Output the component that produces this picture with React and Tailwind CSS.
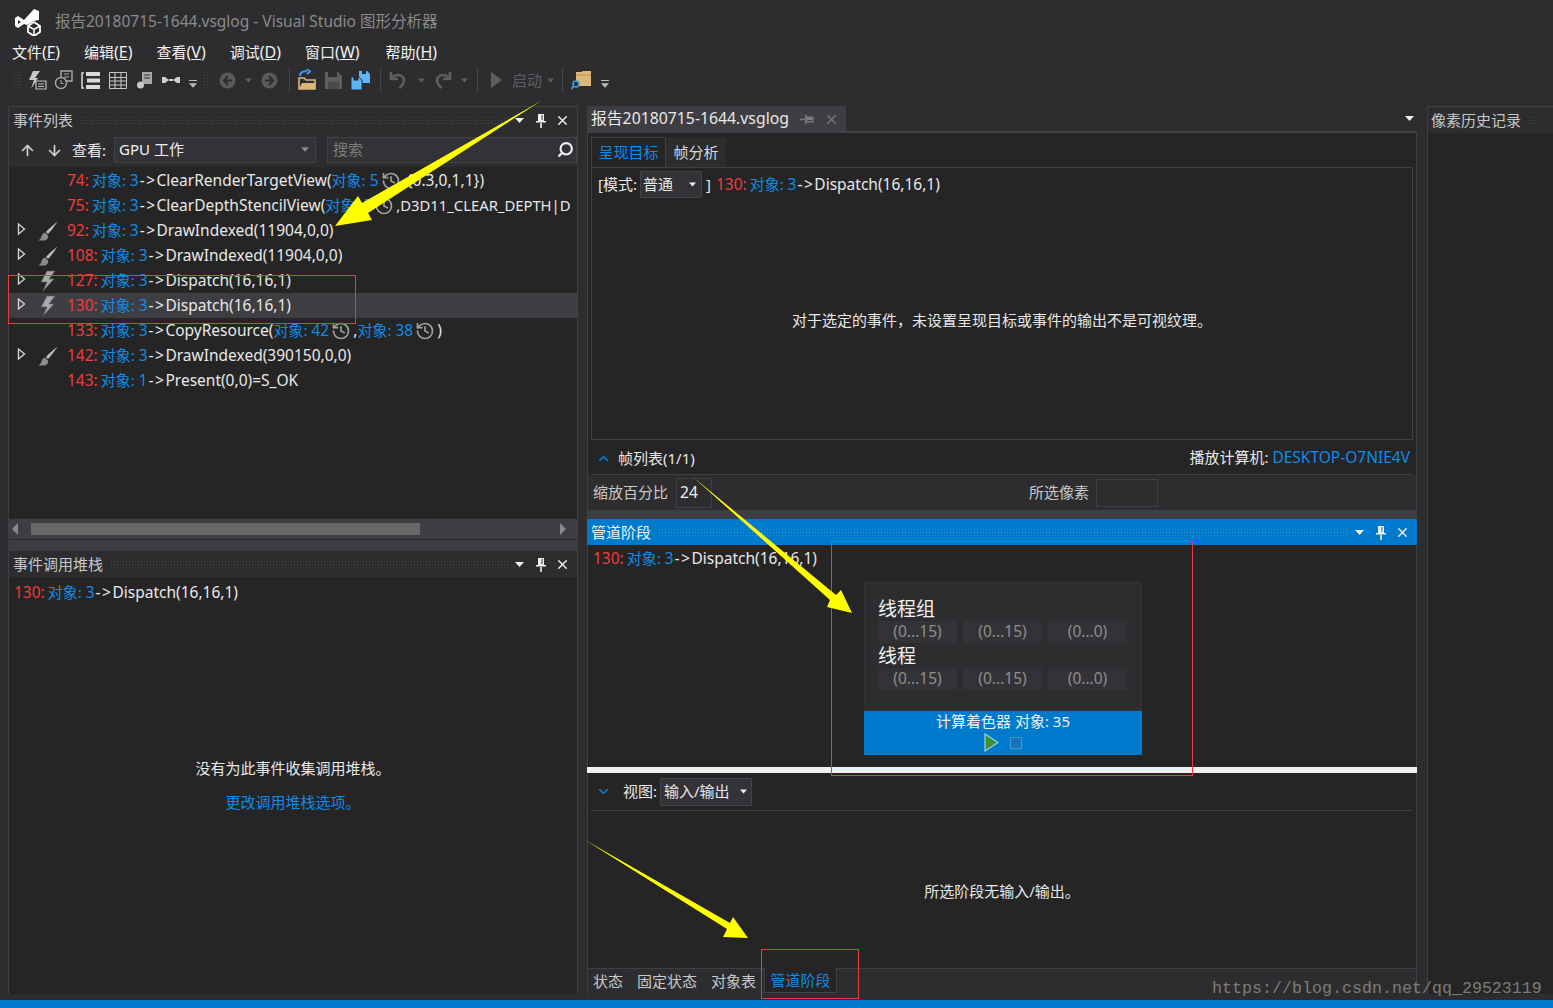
import { ArrowDown, ArrowUp, ChevronDown, ChevronUp, History, Search, X } from 'lucide-react';

const font = { fontFamily: '"Noto Sans", "Noto Sans CJK SC", sans-serif' };

function Caret({ className = 'text-[#f1f1f1]', w = 9 }) {
  return (
    <svg width={w} height="5" viewBox="0 0 9 5" className={className}>
      <path d="M0 0h9L4.500 5z" fill="currentColor" />
    </svg>
  );
}

function Grip({ className = '' }) {
  return <div className={`bg-[radial-gradient(#444448_1px,transparent_1px)] bg-[length:3px_3px] ${className}`} />;
}

function PinIcon({ className = 'text-[#f1f1f1]' }) {
  return (
    <svg width="10" height="15" viewBox="0 0 10 15" className={className}>
      <path d="M2 1h6v7H2zM0 8h10v1.500H0zM4.200 9h1.600v6H4.200z M5.500 2v5h1V2z" fill="currentColor" fillRule="evenodd" />
    </svg>
  );
}

function PanelHeader({ title, controls = true, titleClass = 'pl-[4px]' }) {
  return (
    <div className={`flex h-[26px] items-center bg-[#2d2d30] pr-[7px] text-[15px] text-[#c8c8c8] ${titleClass}`}>
      <span>{title}</span>
      <Grip className="mx-[7px] h-[9px] flex-1" />
      {controls && (
        <div className="flex items-center">
          <Caret />
          <PinIcon className="ml-[12px] text-[#f1f1f1]" />
          <X size={15} strokeWidth={2.2} className="ml-[9px] text-[#f1f1f1]" />
        </div>
      )}
    </div>
  );
}

function Call({ id, obj, children }) {
  return (
    <span className="text-[15.500px]">
      <span className="text-[#f03c3c]">{id}:</span>
      <span className="ml-[3px] text-[15px] text-[#0f8be8]">对象: </span>
      <span className="text-[#0f8be8]">{obj}</span>
      <span className="ml-[1px] text-[#e8e8e8]"><span className="tracking-[1.500px]">-&gt;</span>{children}</span>
    </span>
  );
}

function Brush() {
  return (
    <svg width="20" height="20" viewBox="0 0 20 20">
      <path d="M19.500 .5C15 4 10.500 8 8 11l2 2c3-3 6-7 9.500-12.500z" fill="#bdbdbd" />
      <path d="M7 11.500c-2 .5-3 2-3.500 4S2 18 .5 19.500h5.500c3 0 4.500-2.500 4-5z" fill="#8c8c8c" />
    </svg>
  );
}

function Bolt() {
  return (
    <svg width="18" height="22" viewBox="0 0 18 22">
      <path d="M8 1h8L10 9h5L4 21l4-9H2z" fill="#a9a9a9" stroke="#5c5c5c" strokeWidth="0.700" />
    </svg>
  );
}

function Expander() {
  return (
    <svg width="9" height="12" viewBox="0 0 9 12" className="-mt-[3px]">
      <path d="M1.500 1 7.500 6l-6 5z" fill="none" stroke="#d0d0d0" strokeWidth="1.400" />
    </svg>
  );
}

function Clock() {
  return <History size={20} strokeWidth={2} className="mx-[2px] inline-block shrink-0 text-[#a0a0a0]" />;
}

function EventRow({ expand, icon, selected, children }) {
  return (
    <div className={`flex h-[25px] items-center whitespace-nowrap ${selected ? 'bg-[#3e3e42]' : ''}`}>
      <div className="flex w-[17px] shrink-0 justify-end">{expand && <Expander />}</div>
      <div className="flex w-[41px] shrink-0 justify-center pl-[2px]">{icon}</div>
      <div className="flex items-center text-[15.500px]">{children}</div>
    </div>
  );
}

function ThreadCell({ children }) {
  return <div className="flex h-[22px] w-[79px] items-center justify-center bg-[#333337] text-[15.500px] text-[#8e8e8e]">{children}</div>;
}

function ToolSep({ className = 'mx-[8px]' }) {
  return <div className={`${className} h-[24px] w-[1px] bg-[#46464a]`} />;
}

function VsLogo() {
  return (
    <svg width="28" height="28" viewBox="0 0 28 28" className="ml-[14px] mt-[6px]">
      <path d="M1 10 4 8l6 4L20 1l5 2v9l-5 1-5 3-2 1-3-1-6 4-3-2zM4 12v4l3-2z" fill="#fff" fillRule="evenodd" />
      <path d="m14 18 6-4 6 4v6l-6 4-6-4z" fill="#2d2d30" stroke="#fff" strokeWidth="1.800" />
      <path d="m14 18 6 3.500 6-3.500M20 21.500V28" fill="none" stroke="#fff" strokeWidth="1.500" />
    </svg>
  );
}

function DropMark({ className }) {
  return (
    <div className={`${className} mt-[8px] flex flex-col items-center gap-[2px]`}>
      <div className="h-[1px] w-[8px] bg-[#bbbbbb]" />
      <Caret w={8} className="text-[#bbbbbb]" />
    </div>
  );
}

function Toolbar() {
  return (
    <div className="flex h-[30px] items-center pb-[2px] pl-[13px]">
      <Grip className="h-[24px] w-[8px]" />
      <svg width="20" height="20" viewBox="0 0 20 20" className="ml-[6px]">
        <path d="M6 1h7L8 8h3L4 19l3-9H2z" fill="#c8c8c8" />
        <path d="M9 11h10v8H9z" fill="#2d2d30" stroke="#c0c0c0" strokeWidth="1.200" />
        <path d="M11 14h6m-6 2.500h6" stroke="#c0c0c0" />
      </svg>
      <svg width="20" height="20" viewBox="0 0 20 20" className="ml-[7px]">
        <path d="M7 1h11v10H7z" fill="none" stroke="#a8a8a8" strokeWidth="1.400" />
        <path d="M10 4h5M10 7h5" stroke="#a8a8a8" />
        <circle cx="7" cy="13" r="5.500" fill="#2d2d30" stroke="#a8a8a8" strokeWidth="1.400" />
        <path d="M7 10v3.500h2.500" fill="none" stroke="#a8a8a8" />
      </svg>
      <svg width="19" height="19" viewBox="0 0 19 19" className="ml-[7px]">
        <path d="M5 1h14v4H5zM6 7.500h13v4H6zM5 14h14v4H5z" fill="#d8d8d8" />
        <path d="M3 2H1v15h2" fill="none" stroke="#d8d8d8" strokeWidth="1.500" />
      </svg>
      <svg width="18" height="17" viewBox="0 0 18 17" className="ml-[9px]">
        <path d="M.500.500h17v16H.500zM.500 5.500h17M.500 9h17M.500 13h17M6 1v15M12 1v15" fill="none" stroke="#c8c8c8" />
      </svg>
      <svg width="17" height="19" viewBox="0 0 17 19" className="ml-[9px]">
        <path d="M6 1h10v12H6z" fill="#a8a8a8" />
        <path d="M8 4h6M8 7h6" stroke="#2d2d30" />
        <circle cx="4.500" cy="14" r="3.500" fill="#c8c8c8" />
      </svg>
      <svg width="18" height="8" viewBox="0 0 18 8" className="ml-[9px]">
        <path d="M0 1h3l4 3-4 3H0zM18 1h-3l-4 3 4 3h3zM7 3h4v2H7z" fill="#d0d0d0" />
      </svg>
      <DropMark className="ml-[9px]" />
      <Grip className="ml-[6px] h-[24px] w-[6px]" />
      <svg width="17" height="17" viewBox="0 0 17 17" className="ml-[10px]">
        <circle cx="8.500" cy="8.500" r="8" fill="#5a5a5c" />
        <path d="M9 4 5 8.500 9 13M5 8.500h8" fill="none" stroke="#2d2d30" strokeWidth="2" />
      </svg>
      <Caret w={7} className="ml-[9px] text-[#5e5e60]" />
      <svg width="17" height="17" viewBox="0 0 17 17" className="ml-[9px]">
        <circle cx="8.500" cy="8.500" r="8" fill="#5a5a5c" />
        <path d="m8 4 4 4.500L8 13m4-4.500H4" fill="none" stroke="#2d2d30" strokeWidth="2" />
      </svg>
      <ToolSep className="ml-[11px] mr-[8px]" />
      <svg width="19" height="22" viewBox="0 0 19 22">
        <path d="M1 9h5l2 2h9v9H1z" fill="none" stroke="#dcb67a" strokeWidth="1.600" />
        <path d="M1 20l3-6h14l-2 6z" fill="#dcb67a" />
        <path d="M2 7c0-4 3-5 7-5M9 0l3 2.500L9 5" fill="none" stroke="#3aa0e8" strokeWidth="2" />
      </svg>
      <svg width="17" height="17" viewBox="0 0 17 17" className="ml-[8px]">
        <path d="M0 0h13l4 4v13H0z" fill="#5e5e60" />
        <path d="M3 0h9v5H3z" fill="#2d2d30" />
        <path d="M3 10h11v7H3z" fill="#4a4a4c" />
      </svg>
      <svg width="19" height="19" viewBox="0 0 19 19" className="ml-[9px]">
        <path d="M8 0h8l3 3v9H8z" fill="#5db5f5" />
        <path d="M0 6h8l3 3v10H0z" fill="#5db5f5" stroke="#2d2d30" />
        <path d="M2.500 6h5v3.500h-5zM11 0h4v3h-4z" fill="#2d2d30" />
      </svg>
      <ToolSep className="ml-[10px] mr-[8px]" />
      <svg width="18" height="18" viewBox="0 0 18 18">
        <path d="M2 1v7h7M2.500 8c2-4 7-5 10-3 4 3 3 8-2 12" fill="none" stroke="#5e5e60" strokeWidth="2.600" />
      </svg>
      <Caret w={7} className="ml-[11px] text-[#5e5e60]" />
      <svg width="18" height="18" viewBox="0 0 18 18" className="ml-[9px]">
        <path d="M16 1v7H9M15.500 8c-2-4-7-5-10-3-4 3-3 8 2 12" fill="none" stroke="#5e5e60" strokeWidth="2.600" />
      </svg>
      <Caret w={7} className="ml-[9px] text-[#5e5e60]" />
      <ToolSep className="ml-[9px] mr-[9px]" />
      <svg width="11" height="16" viewBox="0 0 11 16" className="ml-[4px]">
        <path d="M0 0 11 8 0 16z" fill="#5e5e60" />
      </svg>
      <span className="ml-[10px] text-[15px] text-[#5e5e60]">启动</span>
      <Caret w={7} className="ml-[5px] text-[#5e5e60]" />
      <ToolSep />
      <svg width="21" height="20" viewBox="0 0 21 20">
        <path d="M5 2h5l2-1h8v15H5z" fill="#dcb67a" />
        <path d="M5 5h15" stroke="#b08f55" />
        <circle cx="5" cy="14" r="3" fill="#2d2d30" stroke="#3aa0e8" strokeWidth="1.600" />
        <path d="m3 16-3 3" stroke="#3aa0e8" strokeWidth="1.800" />
      </svg>
      <DropMark className="ml-[9px]" />
    </div>
  );
}

function MenuItem({ label, hotkey, className }) {
  return (
    <span className={className}>
      {label}
      <span className="text-[16px]">(<span className="underline">{hotkey}</span>)</span>
    </span>
  );
}

export default function App() {
  return (
    <div style={font} className="relative flex h-[1008px] w-[1553px] flex-col overflow-hidden bg-[#2d2d30] text-[15px] text-[#f1f1f1]">
      {/* title bar */}
      <div className="flex h-[38px] items-center">
        <VsLogo />
        <span className="ml-[13px] mt-[6px] text-[15.500px] text-[#8a8a8a]">报告20180715-1644.vsglog - Visual Studio 图形分析器</span>
      </div>

      {/* menu */}
      <div className="flex h-[28px] items-center gap-[24px] pl-[12px]">
        <MenuItem label="文件" hotkey="F" />
        <MenuItem label="编辑" hotkey="E" />
        <MenuItem label="查看" hotkey="V" />
        <MenuItem label="调试" hotkey="D" />
        <MenuItem label="窗口" hotkey="W" />
        <MenuItem label="帮助" hotkey="H" className="ml-[2px]" />
      </div>

      <Toolbar />

      <div className="mt-[10px] flex h-[888px] pl-[8px]">
        {/* left column */}
        <div className="flex w-[570px] shrink-0 flex-col border-x border-t border-[#3f3f46]">
          <PanelHeader title="事件列表" />
          <div className="flex h-[34px] items-center bg-[#2d2d30]">
            <ArrowUp size={17} strokeWidth={2.400} className="ml-[10px] text-[#d0d0d0]" />
            <ArrowDown size={17} strokeWidth={2.400} className="ml-[10px] text-[#d0d0d0]" />
            <span className="ml-[9px] text-[#e8e8e8]">查看:</span>
            <div className="ml-[8px] flex h-[26px] w-[202px] items-center justify-between border border-[#434346] bg-[#333337] pb-[2px] pl-[4px] pr-[6px]">
              <span>GPU 工作</span>
              <Caret w={8} className="text-[#8a8a8a]" />
            </div>
            <div className="ml-[11px] flex h-[26px] flex-1 items-center justify-between border border-[#434346] bg-[#333337] pb-[2px] pl-[5px] pr-[2px] text-[#7d7d7d]">
              <span>搜索</span>
              <Search size={17} strokeWidth={3} className="-scale-x-100 text-[#f1f1f1]" />
            </div>
          </div>
          <div className="h-[351px] overflow-hidden bg-[#252526] pt-[1px]">
            <EventRow>
              <Call id="74" obj="3">ClearRenderTargetView(</Call>
              <span className="text-[#0f8be8]"><span className="text-[15px]">对象:</span> 5</span>
              <Clock />
              <span className="text-[#e8e8e8]">,{'{'}0.3,0,1,1{'}'})</span>
            </EventRow>
            <EventRow>
              <Call id="75" obj="3">ClearDepthStencilView(</Call>
              <span className="text-[#0f8be8]"><span className="text-[15px]">对象:</span> 5</span>
              <Clock />
              <span className="text-[14.800px] text-[#e8e8e8]">,D3D11_CLEAR_DEPTH|D</span>
            </EventRow>
            <EventRow expand icon={<Brush />}>
              <Call id="92" obj="3">DrawIndexed(11904,0,0)</Call>
            </EventRow>
            <EventRow expand icon={<Brush />}>
              <Call id="108" obj="3">DrawIndexed(11904,0,0)</Call>
            </EventRow>
            <EventRow expand icon={<Bolt />}>
              <Call id="127" obj="3">Dispatch(16,16,1)</Call>
            </EventRow>
            <EventRow expand selected icon={<Bolt />}>
              <Call id="130" obj="3">Dispatch(16,16,1)</Call>
            </EventRow>
            <EventRow>
              <Call id="133" obj="3">CopyResource(</Call>
              <span className="text-[#0f8be8]"><span className="text-[15px]">对象:</span> 42</span>
              <Clock />
              <span className="text-[#e8e8e8]">,</span>
              <span className="text-[#0f8be8]"><span className="text-[15px]">对象:</span> 38</span>
              <Clock />
              <span className="text-[#e8e8e8]">)</span>
            </EventRow>
            <EventRow expand icon={<Brush />}>
              <Call id="142" obj="3">DrawIndexed(390150,0,0)</Call>
            </EventRow>
            <EventRow>
              <Call id="143" obj="1">Present(0,0)=S_OK</Call>
            </EventRow>
          </div>
          {/* scrollbar */}
          <div className="flex h-[22px] items-center border-y border-[#2a2a2c] bg-[#3e3e42] px-[2px]">
            <svg width="6" height="12" viewBox="0 0 6 12" className="ml-[1px]">
              <path d="M6 0v12L0 6z" fill="#8a8a8a" />
            </svg>
            <div className="ml-[13px] h-[12px] w-[389px] bg-[#686868]" />
            <div className="flex-1" />
            <svg width="6" height="12" viewBox="0 0 6 12" className="mr-[9px]">
              <path d="M0 0v12l6-6z" fill="#8a8a8a" />
            </svg>
          </div>
          <div className="h-[11px] bg-[#3e3e42]" />
          <PanelHeader title="事件调用堆栈" />
          <div className="flex flex-1 flex-col items-center bg-[#252526]">
            <div className="h-[25px] w-full pl-[5px] pt-[4px]">
              <Call id="130" obj="3">Dispatch(16,16,1)</Call>
            </div>
            <p className="mt-[155px] text-[#e8e8e8]">没有为此事件收集调用堆栈。</p>
            <p className="mt-[11px] text-[#0f8be8]">更改调用堆栈选项。</p>
          </div>
        </div>

        {/* document */}
        <div className="ml-[9px] flex w-[830px] shrink-0 flex-col">
          <div className="flex h-[25px] items-center justify-between">
            <div className="flex h-full w-[259px] items-center bg-[#3e3e42] pl-[4px] pt-[1px] text-[15.800px] text-[#e8e8e8]">
              <span>报告20180715-1644.vsglog</span>
              <PinIcon className="ml-[13px] rotate-90 text-[#7a7a7a]" />
              <X size={15} strokeWidth={2} className="ml-[12px] text-[#7a7a7a]" />
            </div>
            <Caret className="mr-[3px] text-[#f1f1f1]" />
          </div>
          <div className="flex flex-1 flex-col border-x border-y-2 border-[#3f3f46] border-b-0 bg-[#252526]">
            {/* render target tabs */}
            <div className="px-[3px] pt-[4px]">
              <div className="flex h-[30px] items-end">
                <div className="flex h-[30px] w-[75px] items-center justify-center border border-b-0 border-[#3f3f46] text-[#0f8be8]">呈现目标</div>
                <div className="flex h-[29px] w-[60px] items-center justify-center bg-[#2d2d30] text-[#d8d8d8]">帧分析</div>
              </div>
              <div className="flex h-[273px] flex-col border border-[#3f3f46]">
                <div className="flex h-[30px] items-center pl-[6px] pt-[3px] text-[#e8e8e8]">
                  <span>[模式:</span>
                  <div className="ml-[3px] flex h-[27px] w-[62px] items-center justify-between border border-[#434346] bg-[#333337] pl-[2px] pr-[5px]">
                    <span>普通</span>
                    <Caret w={7} />
                  </div>
                  <span className="ml-[4px] mr-[5px]">]</span>
                  <Call id="130" obj="3">Dispatch(16,16,1)</Call>
                </div>
                <div className="flex flex-1 items-center justify-center pt-[3px] text-[#e8e8e8]">对于选定的事件，未设置呈现目标或事件的输出不是可视纹理。</div>
              </div>
            </div>
            <div className="mx-[3px] flex h-[35px] items-center justify-between border-b border-[#3f3f46] pl-[5px] pr-[3px] pt-[2px] text-[#e8e8e8]">
              <div className="flex items-center">
                <ChevronUp size={15} strokeWidth={3} className="text-[#0a72c0]" />
                <span className="ml-[7px]">帧列表(1/1)</span>
              </div>
              <div>
                <span>播放计算机: </span>
                <span className="text-[15.500px] text-[#0f8be8]">DESKTOP-O7NIE4V</span>
              </div>
            </div>
            <div className="flex h-[35px] items-center bg-[#2d2d30] pl-[5px] text-[#c8c8c8]">
              <span>缩放百分比</span>
              <div className="ml-[8px] flex h-[30px] w-[36px] items-center border border-[#3f3f46] pl-[3px] text-[15.500px] text-[#f1f1f1]">24</div>
              <span className="ml-[317px]">所选像素</span>
              <div className="ml-[7px] h-[28px] w-[62px] border border-[#3f3f46]" />
            </div>
            <div className="h-[9px] bg-[#3e3e42]" />
            {/* pipeline stages */}
            <div className="-mx-[1px] flex h-[26px] items-center bg-[#007acc] pl-[4px] pr-[7px] text-[#f1f1f1]">
              <span>管道阶段</span>
              <div className="mx-[7px] h-[9px] flex-1 bg-[radial-gradient(#2f93d6_1px,transparent_1px)] bg-[length:3px_3px]" />
              <div className="flex items-center">
                <Caret />
                <PinIcon className="ml-[12px] text-[#f1f1f1]" />
                <X size={15} strokeWidth={2.200} className="ml-[9px]" />
              </div>
            </div>
            <div className="flex h-[222px] flex-col items-center">
              <div className="h-[26px] w-full pl-[5px] pt-[2px]">
                <Call id="130" obj="3">Dispatch(16,16,1)</Call>
              </div>
              <div className="ml-[2px] mt-[11px] w-[278px]">
                <div className="h-[129px] border border-[#333337] bg-[#2d2d30] px-[13px] pt-[14px] text-[#f1f1f1]">
                  <div className="h-[24px] text-[19px] leading-[24px]">线程组</div>
                  <div className="flex gap-[6px]">
                    <ThreadCell>(0...15)</ThreadCell>
                    <ThreadCell>(0...15)</ThreadCell>
                    <ThreadCell>(0...0)</ThreadCell>
                  </div>
                  <div className="h-[25px] text-[19px] leading-[27px]">线程</div>
                  <div className="flex gap-[6px]">
                    <ThreadCell>(0...15)</ThreadCell>
                    <ThreadCell>(0...15)</ThreadCell>
                    <ThreadCell>(0...0)</ThreadCell>
                  </div>
                </div>
                <div className="flex h-[44px] flex-col items-center bg-[#007acc] text-[#f1f1f1]">
                  <div className="h-[22px] leading-[20px]">计算着色器 对象: 35</div>
                  <div className="flex items-center gap-[11px]">
                    <svg width="15" height="19" viewBox="0 0 15 19">
                      <path d="M1 1 14 9.500 1 18z" fill="#3b9130" stroke="#9fd0ee" strokeWidth="1.200" />
                    </svg>
                    <div className="h-[12px] w-[12px] border border-[#3f97d8] bg-[#1673b8]" />
                  </div>
                </div>
              </div>
            </div>
            <div className="-mx-[1px] h-[6px] bg-[#f0f0f0]" />
            <div className="mx-[3px] flex h-[38px] items-center border-b border-[#3f3f46] pl-[5px] text-[#e8e8e8]">
              <ChevronDown size={15} strokeWidth={3} className="text-[#0a72c0]" />
              <span className="ml-[12px]">视图:</span>
              <div className="ml-[3px] flex h-[28px] w-[92px] items-center justify-between border border-[#434346] bg-[#333337] pl-[3px] pr-[4px]">
                <span>输入/输出</span>
                <Caret w={7} />
              </div>
            </div>
            <div className="flex h-[158px] items-center justify-center border-b border-[#3f3f46] pt-[3px] text-[#e8e8e8]">所选阶段无输入/输出。</div>
            <div className="flex flex-1 items-start bg-[#2d2d30] pl-[5px] text-[#c8c8c8]">
              <div className="flex h-[25px] items-center gap-[14px]">
                <span>状态</span>
                <span>固定状态</span>
                <span>对象表</span>
              </div>
              <div className="-mt-[1px] ml-[8px] flex h-[25px] w-[73px] items-center justify-center border border-t-0 border-[#3f3f46] bg-[#252526] text-[#0f8be8]">管道阶段</div>
            </div>
          </div>
        </div>

        {/* pixel history */}
        <div className="ml-[10px] flex flex-1 flex-col border-l border-t border-[#3f3f46]">
          <PanelHeader title="像素历史记录" controls={false} titleClass="pl-[3px]" />
          <div className="flex-1 bg-[#252526]" />
        </div>
      </div>

      <div className="mt-[6px] h-[8px] bg-[#007acc]" />

      {/* red outlines drawn on the screenshot */}
      <div className="absolute left-[8px] top-[275px] h-[49px] w-[348px] border border-[#f03a3a]" />
      <div className="absolute left-[831px] top-[541px] h-[235px] w-[362px] border border-[#f03a3a]" />
      <div className="absolute left-[761px] top-[949px] h-[50px] w-[98px] border border-[#f03a3a]" />

      {/* yellow arrows drawn on the screenshot */}
      <svg width="1553" height="1008" viewBox="0 0 1553 1008" className="pointer-events-none absolute left-0 top-0">
        <path d="M541 101 368 213l4 7-37 6 23-30 4 7z" fill="#ffff00" />
        <path d="M693 477 830 600l-3 7 25 6-11-23-5 5z" fill="#ffff00" />
        <path d="M585 840 727 929l-4 8 25 1-15-21-3 6z" fill="#ffff00" />
      </svg>

      {/* watermark */}
      <span className="absolute left-[1212px] top-[976px] font-['Liberation_Mono'] text-[16.670px] text-[#7c7c7c]">https://blog.csdn.net/qq_29523119</span>
    </div>
  );
}
